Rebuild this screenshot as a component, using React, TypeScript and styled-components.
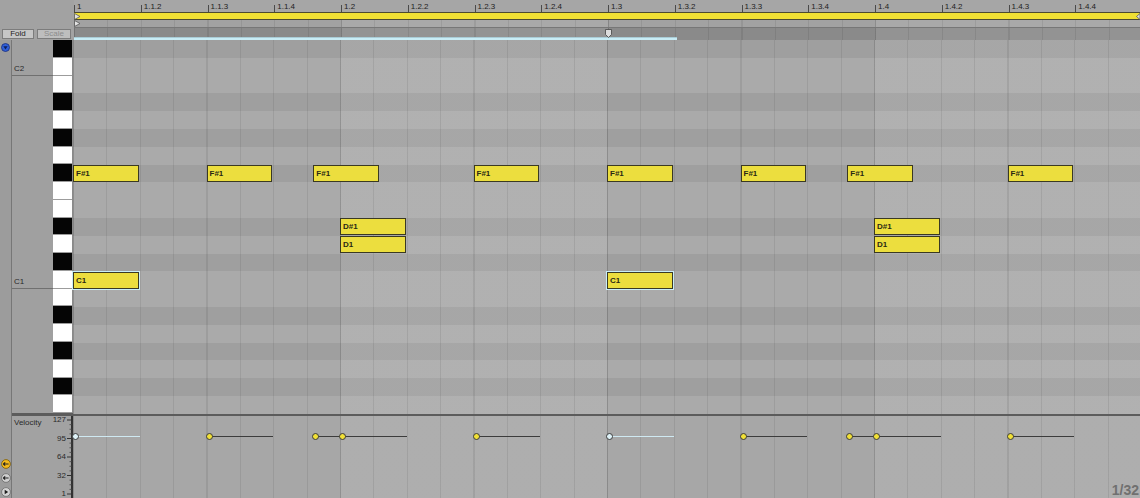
import styled, { createGlobalStyle, css } from 'styled-components';

// geometry of the clip view
const BEAT = 66.75; // one 16th step of the ruler
const ROW = 17.8; // one semitone
const FONT = `'Liberation Sans', 'DejaVu Sans', Arial, sans-serif`;

const ROWS = [
  'C#2', 'C2', 'B1', 'A#1', 'A1', 'G#1', 'G1', 'F#1', 'F1', 'E1', 'D#1',
  'D1', 'C#1', 'C1', 'B0', 'A#0', 'A0', 'G#0', 'G0', 'F#0', 'F0',
];
const isBlack = (name: string) => name.includes('#');

const RULER = [
  '1', '1.1.2', '1.1.3', '1.1.4', '1.2', '1.2.2', '1.2.3', '1.2.4',
  '1.3', '1.3.2', '1.3.3', '1.3.4', '1.4', '1.4.2', '1.4.3', '1.4.4',
];

type Note = { pitch: string; start: number; velocity: number; selected?: boolean };

const NOTES: Note[] = [
  { pitch: 'C1', start: 0, velocity: 100, selected: true },
  { pitch: 'F#1', start: 0, velocity: 100 },
  { pitch: 'F#1', start: 2, velocity: 100 },
  { pitch: 'F#1', start: 3.6, velocity: 100 },
  { pitch: 'D#1', start: 4, velocity: 100 },
  { pitch: 'D1', start: 4, velocity: 100 },
  { pitch: 'F#1', start: 6, velocity: 100 },
  { pitch: 'C1', start: 8, velocity: 100, selected: true },
  { pitch: 'F#1', start: 8, velocity: 100 },
  { pitch: 'F#1', start: 10, velocity: 100 },
  { pitch: 'F#1', start: 11.6, velocity: 100 },
  { pitch: 'D#1', start: 12, velocity: 100 },
  { pitch: 'D1', start: 12, velocity: 100 },
  { pitch: 'F#1', start: 14, velocity: 100 },
];

// velocity lane: 127 sits 4px from the top, 1 sits 78px from the top
const velocityTop = (v: number) => 78 - ((v - 1) / 126) * 74;

const sectionShade = `linear-gradient(90deg, transparent 0 ${4 * BEAT}px, rgba(255,255,255,0.08) ${4 * BEAT}px ${8 * BEAT}px, transparent ${8 * BEAT}px ${12 * BEAT}px, rgba(255,255,255,0.08) ${12 * BEAT}px)`;
const stepLines = `repeating-linear-gradient(90deg, rgba(0,0,0,0.08) 0 1px, transparent 1px ${BEAT / 2}px)`;
const barLines = `repeating-linear-gradient(90deg, rgba(0,0,0,0.1) 0 1px, transparent 1px ${BEAT * 4}px)`;

const gridBackground = css`
  background-image: ${barLines}, ${stepLines}, ${sectionShade};
`;

const GlobalStyle = createGlobalStyle`
  html, body {
    margin: 0;
    padding: 0;
    background: #a1a1a1;
  }
  body {
    font-family: ${FONT};
  }
`;

const Frame = styled.div`
  width: 1140px;
  height: 498px;
  display: flex;
  flex-direction: column;
  overflow: hidden;
  background: #a1a1a1;
`;

/* ---------- header ---------- */

const Header = styled.div`
  display: flex;
  height: 40px;
  flex: 0 0 40px;
`;

const HeaderSide = styled.div`
  width: 74px;
  flex: 0 0 74px;
  display: flex;
  flex-direction: column;
  background: #a2a2a2;
`;

const HeaderSpacer = styled.div`
  flex: 1;
`;

const ButtonRow = styled.div`
  height: 13px;
  display: flex;
  align-items: center;
  gap: 3px;
  padding-left: 2px;
`;

const ToolButton = styled.div<{ $disabled?: boolean }>`
  box-sizing: border-box;
  width: ${(p) => (p.$disabled ? 34 : 32)}px;
  height: 10px;
  display: flex;
  align-items: center;
  justify-content: center;
  background: ${(p) => (p.$disabled ? '#bebebe' : '#c6c6c6')};
  border: 1px solid #7c7c7c;
  font-size: 8px;
  line-height: 8px;
  color: ${(p) => (p.$disabled ? '#8c8c8c' : '#1e1e1e')};
`;

const Timeline = styled.div`
  flex: 1;
  display: flex;
  flex-direction: column;
  min-width: 0;
`;

const Ruler = styled.div`
  height: 12px;
  display: flex;
  background: #a6a6a6;
`;

const RulerCell = styled.div`
  position: relative;
  flex: 0 0 ${BEAT}px;
  box-sizing: border-box;
  padding: 2px 0 0 3px;
  font-size: 8px;
  line-height: 9px;
  color: #1e1e1e;
  white-space: nowrap;

  &::before {
    content: '';
    position: absolute;
    left: 0;
    bottom: 0;
    width: 1px;
    height: 7px;
    background: #4a4a4a;
  }
`;

const LoopBar = styled.div`
  box-sizing: border-box;
  height: 8px;
  display: flex;
  align-items: center;
  justify-content: space-between;
  background: #f0e034;
  border-top: 1px solid #4c4a30;
  border-bottom: 1px solid #4c4a30;
`;

const MarkerRow = styled.div`
  height: 7px;
  display: flex;
  align-items: center;
  background-color: #a2a2a2;
  ${gridBackground}
`;

const ClipRow = styled.div`
  position: relative;
  box-sizing: border-box;
  height: 13px;
  display: flex;
  flex-direction: column;
  justify-content: flex-end;
  background-color: #8a8a8a;
  border-top: 1px solid #777;
  ${gridBackground}
`;

const ClipBar = styled.div`
  box-sizing: border-box;
  width: 603px;
  height: 3px;
  background: #c8ecf5;
  border-top: 1px solid #a9ccd6;
`;

const Playhead = styled.svg`
  position: absolute;
  top: 1px;
  left: 531px;
`;

/* ---------- body ---------- */

const Body = styled.div`
  flex: 1;
  display: flex;
  min-height: 0;
`;

const SideStrip = styled.div`
  width: 12px;
  flex: 0 0 12px;
  display: flex;
  flex-direction: column;
  align-items: center;
  padding: 3px 0 1px;
  box-sizing: border-box;
  background: #9c9c9c;
  border-right: 1px solid #777;
`;

const StripFill = styled.div`
  flex: 1;
`;

const StripIcons = styled.div`
  display: flex;
  flex-direction: column;
  gap: 4px;
`;

const Panes = styled.div`
  flex: 1;
  display: flex;
  flex-direction: column;
  min-width: 0;
`;

const Editor = styled.div`
  height: 373px;
  flex: 0 0 373px;
  display: flex;
`;

const LabelColumn = styled.div`
  width: 41px;
  flex: 0 0 41px;
  display: flex;
  flex-direction: column;
  background: #a0a0a0;
`;

const LabelCell = styled.div<{ $octave: boolean }>`
  box-sizing: border-box;
  height: ${ROW}px;
  padding: 0 0 2px 2px;
  display: flex;
  align-items: flex-end;
  font-size: 8px;
  line-height: 8px;
  color: #2a2a2a;
  border-bottom: 1px solid ${(p) => (p.$octave ? '#707070' : 'transparent')};
`;

const Keyboard = styled.div`
  width: 19px;
  flex: 0 0 19px;
  display: flex;
  flex-direction: column;
  border-right: 1px solid #8a8a8a;
`;

const Key = styled.div<{ $black: boolean }>`
  box-sizing: border-box;
  height: ${ROW}px;
  background: ${(p) => (p.$black ? '#050505' : '#ffffff')};
  border-bottom: 1px solid #9c9c9c;
`;

const NoteGrid = styled.div`
  position: relative;
  flex: 1;
  display: flex;
  flex-direction: column;
`;

const GridRow = styled.div<{ $black: boolean }>`
  height: ${ROW}px;
  flex: 0 0 ${ROW}px;
  background-color: ${(p) => (p.$black ? '#9f9f9f' : '#aaaaaa')};
  ${gridBackground}
`;

const NoteLayer = styled.div`
  position: absolute;
  inset: 0;
`;

const NoteBlock = styled.div<{ $selected?: boolean }>`
  position: absolute;
  box-sizing: border-box;
  height: ${ROW - 0.6}px;
  width: ${BEAT - 0.8}px;
  padding-left: 2px;
  background: #ecde3e;
  border: 1px solid #3a3922;
  font-size: 8px;
  font-weight: bold;
  line-height: 15px;
  color: #2a2914;
  ${(p) =>
    p.$selected &&
    css`
      box-shadow: 0 0 0 1px #c9eef8;
    `}
`;

const Divider = styled.div`
  height: 3px;
  flex: 0 0 3px;
  background: #5c5c5c;
`;

/* ---------- velocity lane ---------- */

const VelocityPane = styled.div`
  flex: 1;
  display: flex;
  min-height: 0;
`;

const VelocityScale = styled.div`
  width: 61px;
  flex: 0 0 61px;
  display: flex;
  background: #a2a2a2;
`;

const VelocityTitle = styled.div`
  flex: 1;
  padding: 2px 0 0 2px;
  font-size: 8px;
  line-height: 10px;
  color: #2a2a2a;
`;

const ScaleLabels = styled.div`
  display: flex;
  flex-direction: column;
  justify-content: space-between;
  align-items: flex-end;
  font-size: 8px;
  line-height: 8px;
  color: #2a2a2a;
`;

const ScaleTicks = styled.svg`
  flex: 0 0 7px;
`;

const VelocityGrid = styled.div`
  position: relative;
  flex: 1;
  background-color: #a7a7a7;
  ${gridBackground}
`;

const Stem = styled.div<{ $selected?: boolean }>`
  position: absolute;
  height: 1px;
  width: ${BEAT - 1}px;
  background: ${(p) => (p.$selected ? '#cfe9f2' : '#3c3c3c')};
`;

const StemDot = styled.span<{ $selected?: boolean }>`
  position: absolute;
  left: -2px;
  top: -3px;
  box-sizing: border-box;
  width: 7px;
  height: 7px;
  border-radius: 50%;
  border: 1px solid #3a3a3a;
  background: ${(p) => (p.$selected ? '#dff3f9' : '#f2e136')};
`;

const GridResolution = styled.div`
  position: absolute;
  right: 1px;
  bottom: 0;
  font-size: 14px;
  font-weight: bold;
  line-height: 16px;
  color: #707070;
`;

/* ---------- little drawings ---------- */

function StartFlag() {
  return (
    <svg width="7" height="7" viewBox="0 0 7 7">
      <path d="M0.5 0.5 L6 3.5 L0.5 6.5 Z" fill="#e4e4e4" stroke="#555" strokeWidth="0.8" />
    </svg>
  );
}

function EndFlag() {
  return (
    <svg width="4" height="7" viewBox="0 0 4 7">
      <path d="M4 0.5 L0.5 3.5 L4 6.5 Z" fill="#e4e4e4" stroke="#555" strokeWidth="0.8" />
    </svg>
  );
}

function FoldIcon() {
  return (
    <svg width="9" height="9" viewBox="0 0 9 9">
      <circle cx="4.5" cy="4.5" r="4" fill="#2f5fd8" stroke="#1b2f78" strokeWidth="0.8" />
      <path d="M2.4 3.2 H6.6 L4.5 6.4 Z" fill="#0e1f5c" />
    </svg>
  );
}

function ArrowIcon({ active }: { active?: boolean }) {
  return (
    <svg width="10" height="10" viewBox="0 0 10 10">
      <circle
        cx="5"
        cy="5"
        r="4.4"
        fill={active ? '#f2b91c' : '#cfcfcf'}
        stroke={active ? '#7a5a06' : '#6c6c6c'}
        strokeWidth="0.8"
      />
      <path d="M2.3 5 H7.6 M2.3 5 L4.2 3.4 M2.3 5 L4.2 6.6" stroke="#222" strokeWidth="1.1" fill="none" />
    </svg>
  );
}

function PlayIcon() {
  return (
    <svg width="10" height="10" viewBox="0 0 10 10">
      <circle cx="5" cy="5" r="4.4" fill="#d4d4d4" stroke="#6c6c6c" strokeWidth="0.8" />
      <path d="M3.7 2.8 L7.2 5 L3.7 7.2 Z" fill="#1e1e1e" />
    </svg>
  );
}

function VelocityTicks() {
  const majors = [0, 1, 2, 3, 4].map((i) => 4 + i * 18.5);
  const minors: number[] = [];
  for (let i = 0; i < 4; i += 1) {
    for (let j = 1; j < 4; j += 1) minors.push(4 + i * 18.5 + (j * 18.5) / 4);
  }
  return (
    <ScaleTicks width="7" height="82" viewBox="0 0 7 82">
      <line x1="6" y1="0" x2="6" y2="82" stroke="#333" strokeWidth="2" />
      {majors.map((y) => (
        <line key={`M${y}`} x1="1" y1={y} x2="6" y2={y} stroke="#333" strokeWidth="1" />
      ))}
      {minors.map((y) => (
        <line key={`m${y}`} x1="3.5" y1={y} x2="6" y2={y} stroke="#444" strokeWidth="0.8" />
      ))}
    </ScaleTicks>
  );
}

function App() {
  return (
    <>
      <GlobalStyle />
      <Frame>
        <Header>
          <HeaderSide>
            <HeaderSpacer />
            <ButtonRow>
              <ToolButton>Fold</ToolButton>
              <ToolButton $disabled>Scale</ToolButton>
            </ButtonRow>
          </HeaderSide>
          <Timeline>
            <Ruler>
              {RULER.map((label) => (
                <RulerCell key={label}>{label}</RulerCell>
              ))}
            </Ruler>
            <LoopBar>
              <StartFlag />
              <EndFlag />
            </LoopBar>
            <MarkerRow>
              <StartFlag />
            </MarkerRow>
            <ClipRow>
              <Playhead width="7" height="9" viewBox="0 0 7 9">
                <path d="M0.5 0.5 H6.5 V5.5 L3.5 8.5 L0.5 5.5 Z" fill="#dcdcdc" stroke="#444" strokeWidth="0.8" />
              </Playhead>
              <ClipBar />
            </ClipRow>
          </Timeline>
        </Header>
        <Body>
          <SideStrip>
            <FoldIcon />
            <StripFill />
            <StripIcons>
              <ArrowIcon active />
              <ArrowIcon />
              <PlayIcon />
            </StripIcons>
          </SideStrip>
          <Panes>
            <Editor>
              <LabelColumn>
                {ROWS.map((name) => (
                  <LabelCell key={name} $octave={name.startsWith('C') && !isBlack(name)}>
                    {name.startsWith('C') && !isBlack(name) ? name : ''}
                  </LabelCell>
                ))}
              </LabelColumn>
              <Keyboard>
                {ROWS.map((name) => (
                  <Key key={name} $black={isBlack(name)} />
                ))}
              </Keyboard>
              <NoteGrid>
                {ROWS.map((name) => (
                  <GridRow key={name} $black={isBlack(name)} />
                ))}
                <NoteLayer>
                  {NOTES.map((n) => (
                    <NoteBlock
                      key={`${n.pitch}-${n.start}`}
                      $selected={n.selected}
                      style={{ left: n.start * BEAT, top: ROWS.indexOf(n.pitch) * ROW + 0.3 }}
                    >
                      {n.pitch}
                    </NoteBlock>
                  ))}
                </NoteLayer>
              </NoteGrid>
            </Editor>
            <Divider />
            <VelocityPane>
              <VelocityScale>
                <VelocityTitle>Velocity</VelocityTitle>
                <ScaleLabels>
                  <span>127</span>
                  <span>95</span>
                  <span>64</span>
                  <span>32</span>
                  <span>1</span>
                </ScaleLabels>
                <VelocityTicks />
              </VelocityScale>
              <VelocityGrid>
                {NOTES.filter((n, i) => NOTES.findIndex((m) => m.start === n.start) === i).map((n) => (
                  <Stem
                    key={`v-${n.start}`}
                    $selected={n.selected}
                    style={{ left: n.start * BEAT + 1, top: velocityTop(n.velocity) }}
                  >
                    <StemDot $selected={n.selected} />
                  </Stem>
                ))}
                <GridResolution>1/32</GridResolution>
              </VelocityGrid>
            </VelocityPane>
          </Panes>
        </Body>
      </Frame>
    </>
  );
}

export default App;
